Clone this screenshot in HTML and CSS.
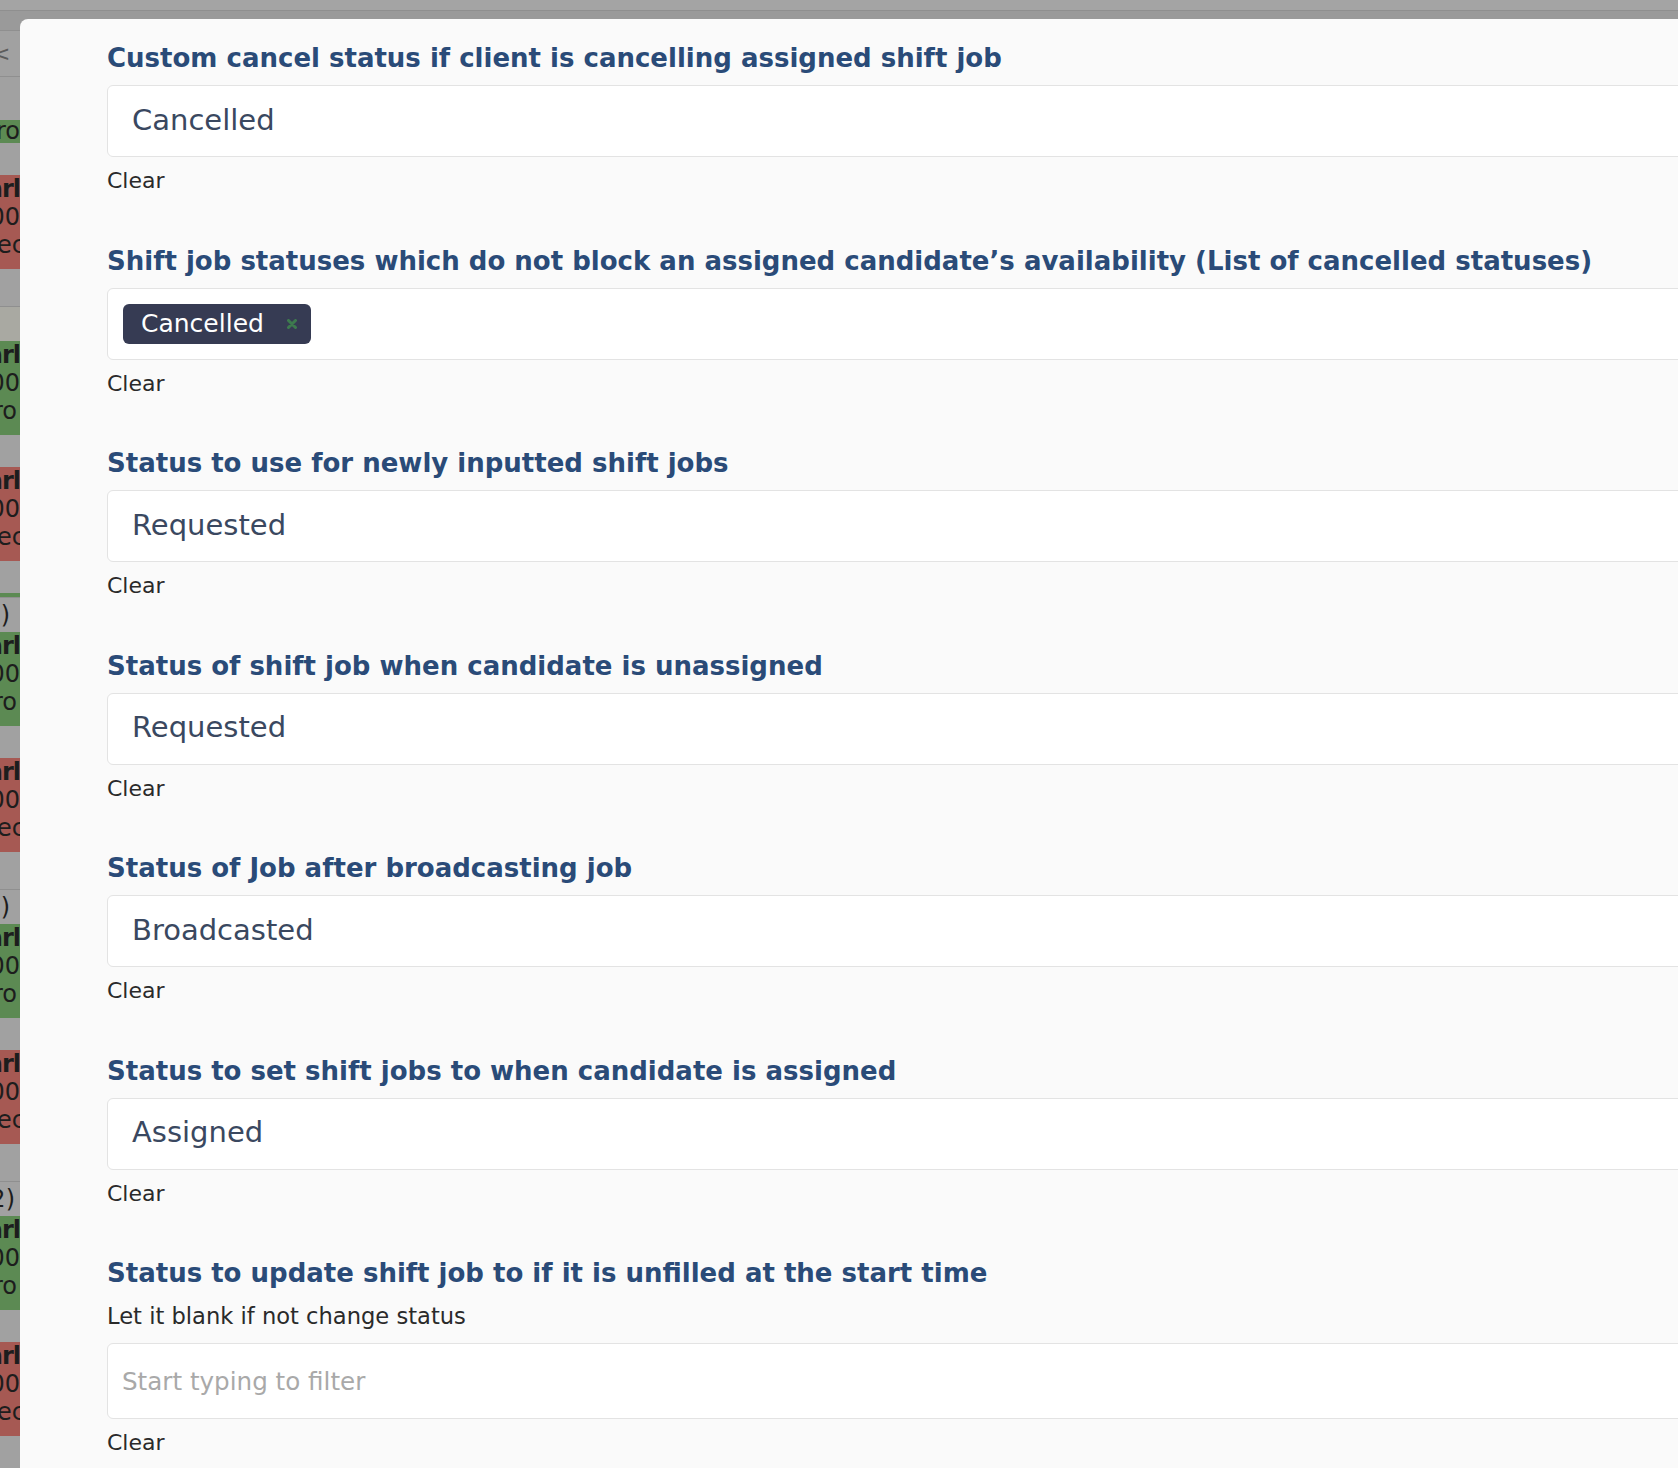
FILE: index.html
```html
<!DOCTYPE html>
<html lang="en">
  <head>
    <meta charset="UTF-8" />
    <meta name="viewport" content="width=device-width, initial-scale=1.0" />
    <link rel="stylesheet" href="styles.css">
    <title>Shift job statuses</title>
  </head>
  <body class="page">
    <!-- календарь под модалкой -->
    <div class="topbar"></div>
    <div class="subbar"></div>
    <div class="calendar">
      <div class="calendar__nav"><span>&lt;</span></div>
      <div class="slot slot--top"></div>
      <div class="event event--green event--cut"><span class="event__line">Pro</span></div>
      <div class="slot"></div>
      <div class="event event--red">
        <span class="event__line event__line--bold">Charl</span>
        <span class="event__line">10:00</span>
        <span class="event__line event__line--cut">Rec</span>
      </div>
      <div class="slot slot--tall"></div>
      <div class="day day--today"></div>
      <div class="event event--green">
        <span class="event__line event__line--bold">Charl</span>
        <span class="event__line">10:00</span>
        <span class="event__line event__line--short">Pro</span>
      </div>
      <div class="slot"></div>
      <div class="event event--red">
        <span class="event__line event__line--bold">Charl</span>
        <span class="event__line">10:00</span>
        <span class="event__line event__line--cut">Rec</span>
      </div>
      <div class="slot"></div>
      <div class="event-line"></div>
      <div class="day"><span>(1)</span></div>
      <div class="event event--green">
        <span class="event__line event__line--bold">Charl</span>
        <span class="event__line">10:00</span>
        <span class="event__line event__line--short">Pro</span>
      </div>
      <div class="slot"></div>
      <div class="event event--red">
        <span class="event__line event__line--bold">Charl</span>
        <span class="event__line">10:00</span>
        <span class="event__line event__line--cut">Rec</span>
      </div>
      <div class="slot slot--tall"></div>
      <div class="day"><span>(2)</span></div>
      <div class="event event--green">
        <span class="event__line event__line--bold">Charl</span>
        <span class="event__line">10:00</span>
        <span class="event__line event__line--short">Pro</span>
      </div>
      <div class="slot"></div>
      <div class="event event--red">
        <span class="event__line event__line--bold">Charl</span>
        <span class="event__line">10:00</span>
        <span class="event__line event__line--cut">Rec</span>
      </div>
      <div class="slot slot--tall"></div>
      <div class="day day--wide"><span>(12)</span></div>
      <div class="event event--green">
        <span class="event__line event__line--bold">Charl</span>
        <span class="event__line">10:00</span>
        <span class="event__line event__line--short">Pro</span>
      </div>
      <div class="slot"></div>
      <div class="event event--red">
        <span class="event__line event__line--bold">Charl</span>
        <span class="event__line">10:00</span>
        <span class="event__line event__line--cut">Rec</span>
      </div>
      <div class="slot"></div>
    </div>

    <!-- модалка с настройками статусов -->
    <div class="modal">
      <section class="setting">
        <h2 class="setting__title">Custom cancel status if client is cancelling assigned shift job</h2>
        <div class="setting__field">Cancelled</div>
        <div class="setting__clear">Clear</div>
      </section>
      <section class="setting">
        <h2 class="setting__title">Shift job statuses which do not block an assigned candidate’s availability (List of cancelled statuses)</h2>
        <div class="setting__field setting__field--tags">
          <span class="tag">
            Cancelled
            <svg class="tag__remove" width="10" height="10" viewBox="0 0 10 10">
              <path d="M1.5 1.5 L8.5 8.5 M8.5 1.5 L1.5 8.5" />
            </svg>
          </span>
        </div>
        <div class="setting__clear">Clear</div>
      </section>
      <section class="setting">
        <h2 class="setting__title">Status to use for newly inputted shift jobs</h2>
        <div class="setting__field">Requested</div>
        <div class="setting__clear">Clear</div>
      </section>
      <section class="setting">
        <h2 class="setting__title">Status of shift job when candidate is unassigned</h2>
        <div class="setting__field">Requested</div>
        <div class="setting__clear">Clear</div>
      </section>
      <section class="setting">
        <h2 class="setting__title">Status of Job after broadcasting job</h2>
        <div class="setting__field">Broadcasted</div>
        <div class="setting__clear">Clear</div>
      </section>
      <section class="setting">
        <h2 class="setting__title">Status to set shift jobs to when candidate is assigned</h2>
        <div class="setting__field">Assigned</div>
        <div class="setting__clear">Clear</div>
      </section>
      <section class="setting">
        <h2 class="setting__title">Status to update shift job to if it is unfilled at the start time</h2>
        <p class="setting__hint">Let it blank if not change status</p>
        <input class="setting__search" type="text" placeholder="Start typing to filter" />
        <div class="setting__clear">Clear</div>
      </section>
    </div>
  </body>
</html>
```

FILE: styles.css
```css
html,
.page {
  overflow: hidden;
}
.page {
  margin: 0;
  background: #a1a1a1;
  font-family: "DejaVu Sans", sans-serif;
}
.topbar {
  height: 10px;
  background: #a4a4a4;
  border-bottom: 1px solid #8f8f8f;
}
.subbar {
  height: 19px;
  background: #9a9a9a;
  border-bottom: 1px solid #8f8f8f;
}
.calendar {
  width: 20px;
  overflow: hidden;
  display: flex;
  flex-direction: column;
  color: #1d1d1d;
  font-size: 24px;
  line-height: 28px;
}
.calendar__nav {
  height: 45px;
  border-bottom: 1px solid #8f8f8f;
  display: flex;
  align-items: center;
  color: #5c5c5c;
  font-size: 22px;
}
.calendar__nav span {
  margin-left: -8px;
}
.slot {
  height: 32px;
  flex-shrink: 0;
}
.slot--top {
  height: 43px;
}
.slot--tall {
  height: 37px;
}
.day {
  height: 34px;
  flex-shrink: 0;
  border-top: 1px solid #8f8f8f;
  display: flex;
  justify-content: flex-end;
  align-items: center;
  padding-right: 10px;
  font-size: 24px;
  white-space: nowrap;
}
.day--today {
  background: #a9a9a2;
}
.day--wide {
  padding-right: 5px;
}
.event {
  height: 94px;
  flex-shrink: 0;
  display: flex;
  flex-direction: column;
  white-space: nowrap;
}
.event--green {
  background: #5c8a53;
}
.event--red {
  background: #a65953;
}
.event--cut {
  height: 23px;
  line-height: 23px;
}
.event-line {
  height: 4px;
  flex-shrink: 0;
  background: #5c8a53;
}
.event__line {
  display: flex;
  justify-content: flex-end;
}
.event__line--bold {
  font-weight: bold;
  letter-spacing: -1px;
}
.event__line--cut {
  margin-right: -5px;
}
.event__line--short {
  margin-right: 3px;
}
.modal {
  position: fixed;
  top: 19px;
  left: 20px;
  bottom: 0;
  width: 1800px;
  box-sizing: border-box;
  padding: 23px 0 0 87px;
  background: #fafafa;
  border-radius: 8px 0 0 0;
  overflow: hidden;
}
.setting {
  margin-bottom: 50.5px;
}
.setting__title {
  margin: 0 0 11px;
  font-size: 26px;
  line-height: 32px;
  font-weight: bold;
  color: #2a4b78;
  white-space: nowrap;
}
.setting__hint {
  margin: 14px 0 14px;
  font-size: 22.6px;
  line-height: 26px;
  color: #2a2a2a;
}
.setting__field {
  height: 72px;
  box-sizing: border-box;
  border: 1px solid #e3e3e3;
  border-radius: 6px;
  background: #fff;
  display: flex;
  align-items: center;
  padding: 0 0 3px 24px;
  font-size: 29px;
  color: #3a4860;
}
.setting__field--tags {
  padding: 0 0 0 15px;
}
.setting__search {
  display: block;
  width: 100%;
  height: 76px;
  box-sizing: border-box;
  border: 1px solid #e3e3e3;
  border-radius: 6px;
  background: #fff;
  padding: 0 0 0 14px;
  font-family: "DejaVu Sans", sans-serif;
  font-size: 24.6px;
  color: #3a4860;
  outline: none;
}
.setting__search::placeholder {
  color: #a9a9a9;
}
.setting__clear {
  margin-top: 11px;
  font-size: 22px;
  line-height: 26px;
  color: #2a2a2a;
}
.tag {
  display: inline-flex;
  align-items: center;
  gap: 23px;
  height: 40px;
  padding: 0 14px 0 18px;
  background: #363b53;
  color: #fff;
  border-radius: 6px;
  font-size: 25px;
}
.tag__remove {
  stroke: #3d7a4e;
  stroke-width: 3;
  stroke-linecap: round;
}
```
